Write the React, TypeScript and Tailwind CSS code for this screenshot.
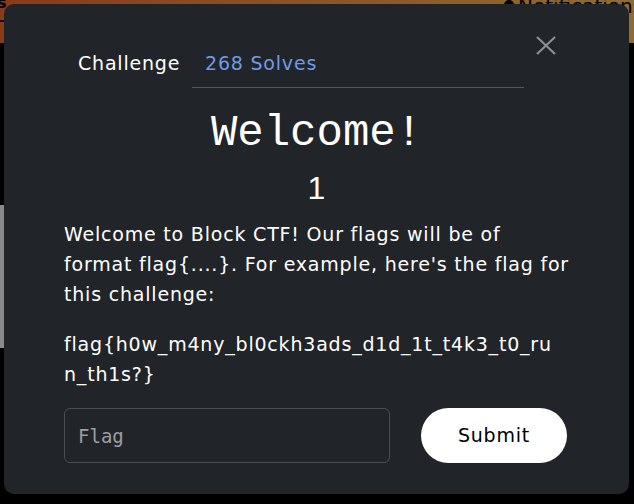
export default function App() {
  const sans = { fontFamily: '"DejaVu Sans", sans-serif' };
  return (
    <div className="relative w-[634px] h-[504px] bg-black overflow-hidden pt-[4px] pl-[4px]" style={sans}>
      {/* background page behind the modal */}
      <div className="absolute left-0 top-0 w-full h-[43px] bg-linear-to-r from-[#8a3a1a] to-[#8d6c31]" />
      <div className="absolute left-0 top-[20px] w-[6px] h-[2px] bg-[#1a0d06]" />
      <div className="absolute left-[-3px] top-[-9px] text-[16px] font-bold text-black">s</div>
      <div className="absolute left-[504px] top-[-9px] flex items-center gap-[4px] text-[20px] text-black whitespace-nowrap">
        <span className="inline-block w-[10px] h-[12px] rounded-t-full bg-black" />
        <span>Notifications</span>
      </div>
      <div className="absolute left-0 top-[205px] w-[5px] h-[143px] bg-[#8a8a8a]" />

      {/* modal */}
      <div className="relative w-[625px] h-[490px] rounded-[10px] bg-[#212529] pt-[40px] px-[60px] tracking-[0.8px]">
        <button className="absolute left-[532px] top-[32px] w-[20px] h-[19px]" aria-label="Close">
          <svg width="20" height="19" viewBox="0 0 20 19" fill="none" stroke="#8b8e92" strokeWidth="2.2">
            <line x1="1" y1="1" x2="19" y2="18" />
            <line x1="19" y1="1" x2="1" y2="18" />
          </svg>
        </button>

        <div className="flex w-[460px] h-[44px] text-[19px]">
          <div className="w-[128px] pl-[14px] pt-[4px] leading-[30px] text-white">Challenge</div>
          <div className="flex-1 border-b border-[#55585c] pl-[13px] pt-[4px] leading-[30px] text-[#6f9ae6]">268 Solves</div>
        </div>

        <h1
          className="mt-[19px] text-center text-[44px] leading-[53px] text-white tracking-normal"
          style={{ fontFamily: '"Liberation Mono", monospace' }}
        >
          Welcome!
        </h1>
        <div
          className="mt-[8px] text-center text-[32px] leading-[40px] text-white tracking-normal"
          style={{ fontFamily: '"Liberation Sans", sans-serif' }}
        >
          1
        </div>

        <p className="mt-[11px] text-[19px] leading-[30px] text-white whitespace-nowrap">
          Welcome to Block CTF! Our flags will be of
          <br />
          format flag{'{'}....{'}'}. For example, here's the flag for
          <br />
          this challenge:
        </p>
        <p className="mt-[20px] text-[19px] leading-[30px] text-white whitespace-nowrap">
          flag{'{'}h0w_m4ny_bl0ckh3ads_d1d_1t_t4k3_t0_ru
          <br />
          n_th1s?{'}'}
        </p>

        <div className="mt-[19px] flex items-center gap-[31px]">
          <input
            type="text"
            placeholder="Flag"
            className="w-[326px] h-[55px] rounded-[6px] border border-[#4a4d52] bg-[#212529] px-[13px] text-[19px] text-white placeholder:text-[#9c9ea2] outline-none tracking-normal"
            style={{ fontFamily: '"DejaVu Sans Mono", monospace' }}
          />
          <button className="w-[146px] h-[55px] rounded-full bg-white text-[19px] text-black">Submit</button>
        </div>
      </div>
    </div>
  );
}
